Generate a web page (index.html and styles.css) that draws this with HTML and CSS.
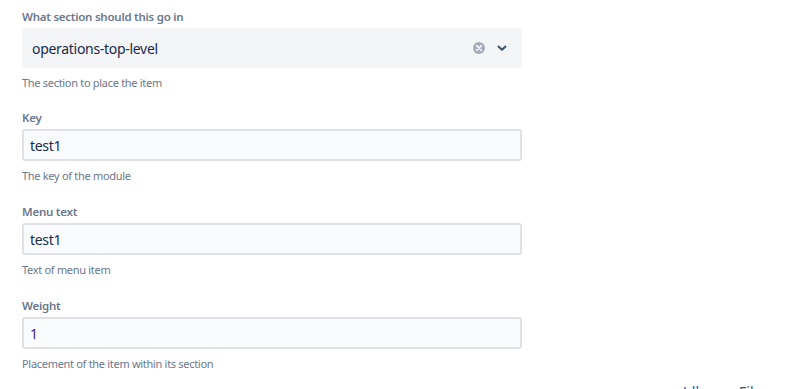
FILE: index.html
```html
<!DOCTYPE html>
<html lang="en">
<head>
    <meta charset="UTF-8">
    <meta name="viewport" content="width=device-width, initial-scale=1.0">
    <title>Menu item</title>
    <link rel="stylesheet" href="styles.css">
</head>
<body>
    <form class="item-form">
        <div class="field field-select">
            <label class="field-label">What section should this go in</label>
            <div class="select">
                <span class="select-value">operations-top-level</span>
                <span class="select-icons">
                    <svg class="clear-icon" width="14" height="14" viewBox="0 0 14 14">
                        <circle cx="7" cy="7" r="6" fill="#a5adba"/>
                        <path d="M4.8 4.8l4.4 4.4M9.2 4.8l-4.4 4.4" stroke="#f4f5f7" stroke-width="1.8" stroke-linecap="round"/>
                    </svg>
                    <svg class="chevron-icon" width="12" height="12" viewBox="0 0 12 12">
                        <path d="M2.5 4.5L6 7.8l3.5-3.3" fill="none" stroke="#42526e" stroke-width="2" stroke-linecap="round" stroke-linejoin="round"/>
                    </svg>
                </span>
            </div>
            <div class="field-help">The section to place the item</div>
        </div>

        <div class="field">
            <label class="field-label" for="key">Key</label>
            <input class="text-input" type="text" id="key" value="test1">
            <div class="field-help">The key of the module</div>
        </div>

        <div class="field">
            <label class="field-label" for="menuText">Menu text</label>
            <input class="text-input" type="text" id="menuText" value="test1">
            <div class="field-help">Text of menu item</div>
        </div>

        <div class="field">
            <label class="field-label" for="weight">Weight</label>
            <input class="text-input number" type="text" id="weight" value="1">
            <div class="field-help">Placement of the item within its section</div>
        </div>
    </form>

    <div class="footer-links">
        <a href="#" class="footer-link">Jdl</a>
        <a href="#" class="footer-link muted">Fil</a>
    </div>
</body>
</html>
```

FILE: styles.css
```css
body {
    margin: 0;
    font-family: "Noto Sans", "Open Sans", sans-serif;
    background: #fff;
    color: #172b4d;
    height: 389px;
    overflow: hidden;
}
.item-form {
    width: 500px;
    padding: 9px 0 0 22px;
}
.field {
    margin-bottom: 20px;
}
.field-select {
    margin-bottom: 19px;
}
.field-label {
    display: block;
    font-size: 11.5px;
    font-weight: 600;
    letter-spacing: -0.25px;
    color: #6b778c;
    line-height: 16px;
    margin-bottom: 3px;
}
.select {
    height: 40px;
    background: #f4f5f7;
    border-radius: 3px;
    display: flex;
    align-items: center;
    justify-content: space-between;
    padding: 0 14px 0 10px;
    box-sizing: border-box;
}
.select-value {
    font-size: 14px;
    letter-spacing: -0.3px;
    color: #172b4d;
}
.select-icons {
    display: flex;
    align-items: center;
    gap: 10px;
}
.text-input {
    display: block;
    width: 100%;
    box-sizing: border-box;
    height: 32px;
    border: 2px solid #dfe1e6;
    border-radius: 3px;
    background: #fafbfc;
    padding: 0 6px;
    font-family: inherit;
    font-size: 14px;
    letter-spacing: -0.3px;
    color: #172b4d;
    outline: none;
}
.text-input.number {
    color: #3c1e8a;
}
.field-help {
    font-size: 11px;
    letter-spacing: -0.3px;
    color: #6b778c;
    margin-top: 7px;
    line-height: 16px;
}
.footer-links {
    display: flex;
    gap: 40px;
    padding-left: 683px;
    margin-top: -10px;
}
.footer-link {
    font-size: 14px;
    color: #0052cc;
    text-decoration: none;
}
.footer-link.muted {
    color: #42526e;
}
```
